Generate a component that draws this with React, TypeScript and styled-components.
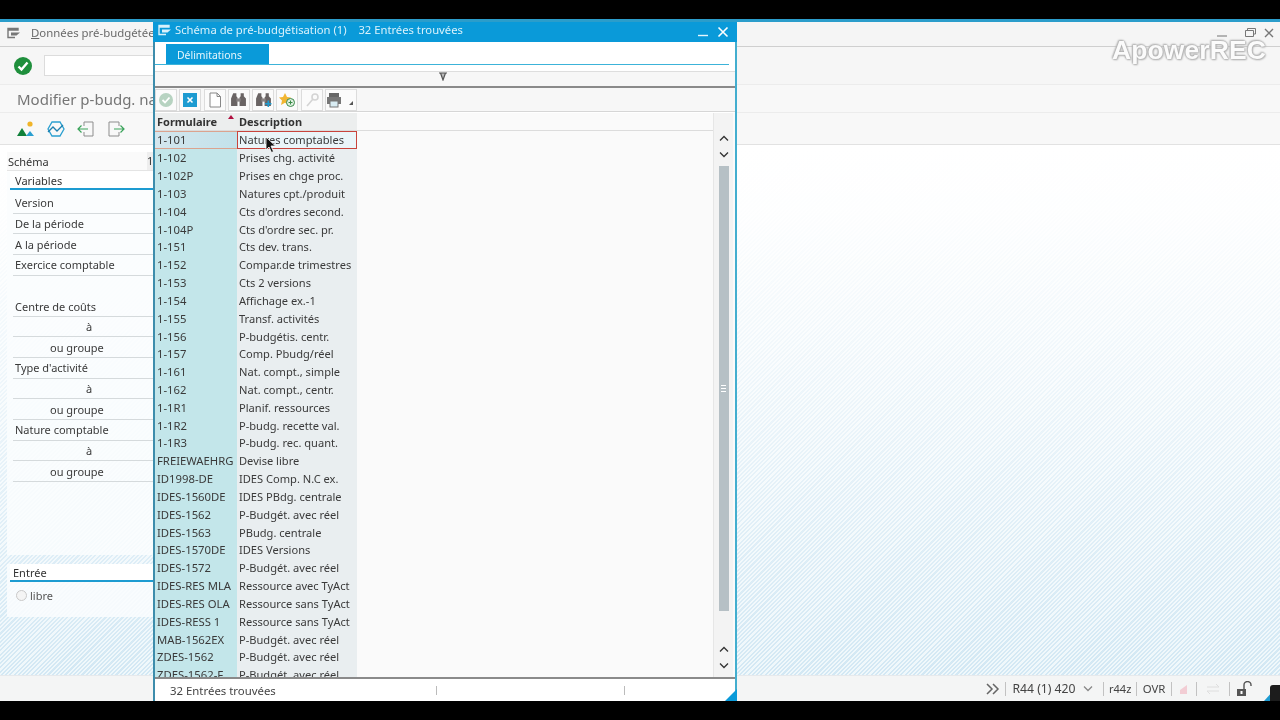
import React from "react";
import styled, { createGlobalStyle } from "styled-components";

const Global = createGlobalStyle`
  html, body { margin: 0; padding: 0; background: #000; overflow: hidden; }
  body { font-family: "Noto Sans", "DejaVu Sans", sans-serif; }
  * { box-sizing: border-box; }
`;

const Screen = styled.div`
  width: 1280px; height: 720px; display: flex; flex-direction: column; background: #000;
  filter: blur(0.4px);
`;
const BlackBar = styled.div<{ $h: number }>`height: ${p => p.$h}px; background: #000; flex: none;`;

const SapWindow = styled.div`
  position: relative; height: 682px; flex: none; display: flex; flex-direction: column;
  border-top: 3px solid #2b9dcb; background: #f7f7f7; overflow: hidden;
`;
const TitleBar = styled.div`
  height: 25px; flex: none; display: flex; align-items: center; gap: 10px; padding: 0 5px 3px 7px;
  background: #f5f5f5; border-bottom: 1px solid #cfcfcf; font-size: 11.4px; color: #6a6a6a;
  u { text-decoration: underline; }
`;
const WinControls = styled.div`
  margin-left: auto; display: flex; align-items: center; gap: 6px;
  svg:first-child { margin-right: 10px; }
`;
const CommandBar = styled.div`
  height: 38px; flex: none; display: flex; align-items: center; gap: 12px; padding: 0 14px;
  background: #f6f6f6; border-bottom: 1px solid #ececec;
`;
const CommandInput = styled.div`width: 210px; height: 21px; background: #fff; border: 1px solid #dcdcdc;`;
const PageTitle = styled.div`
  height: 28px; flex: none; display: flex; align-items: center; padding-left: 17px;
  font-size: 15px; color: #757575; background: #f8f8f8; border-bottom: 1px solid #ececec;
`;
const AppBar = styled.div`
  height: 32px; flex: none; display: flex; align-items: center; gap: 12px; padding-left: 17px;
  background: #f8f8f8; border-bottom: 1px solid #e2e2e2;
`;
const Body = styled.div`
  flex: 1; padding: 7px 0 0 7px; display: flex; flex-direction: column;
  background:
    linear-gradient(to bottom, #fff 0%, rgba(255,255,255,.96) 12%, rgba(255,255,255,.6) 50%, rgba(255,255,255,.08) 100%),
    repeating-linear-gradient(135deg, #cfe6f3 0 1.5px, #eef7fb 1.5px 3px);
`;
const SchemaRow = styled.div`
  height: 19px; width: 146px; overflow: hidden; display: flex; align-items: center; font-size: 11px; color: #333;
  padding-left: 1px; border-bottom: 1px solid #e4e4e4; background: #fafafa;
`;
const SchemaValue = styled.span`margin-left: auto; width: 6px; flex: none; height: 18px; line-height: 18px; background: #eee; overflow: hidden;`;
const Section = styled.div<{ $h: number; $mt: number }>`
  width: 260px; height: ${p => p.$h}px; margin-top: ${p => p.$mt}px; padding: 0 0 0 6px; background: rgba(250,253,254,.85);
`;
const SectionHead = styled.div<{ $pad: number }>`
  height: 18px; margin-left: -3px; padding-left: ${p => p.$pad}px; display: flex; align-items: center; font-size: 11px; color: #333;
  border-bottom: 2px solid #1d9bd1; background: #fff;
`;
const FormRows = styled.div`padding-top: 3px;`;
const FormRow = styled.div<{ $indent: number; $line: boolean }>`
  height: 20.65px; display: flex; align-items: center; padding-left: ${p => p.$indent}px;
  font-size: 11px; color: #3a3a3a; border-bottom: 1px solid ${p => (p.$line ? "#d5dadc" : "transparent")};
`;
const Radio = styled.span`
  width: 11px; height: 11px; border-radius: 50%; border: 1px solid #c9c9c9; background: #f4f4f4; margin: 0 3px 0 2px; flex: none;
`;
const RadioRow = styled.div`
  display: flex; align-items: center; height: 20px; margin-top: 3px; padding-left: 1px; font-size: 11px; color: #555;
`;
const StatusBar = styled.div`
  height: 26px; flex: none; display: flex; align-items: center; justify-content: flex-end; background: #f4f5f5;
  border-top: 1px solid #e6e9ec; color: #444;
`;
const StatusText = styled.span<{ $w: number; $size: number }>`
  width: ${p => p.$w}px; font-size: ${p => p.$size}px; text-align: center; white-space: nowrap;
`;
const StatusArrow = styled.span`width: 21px; display: flex; justify-content: center;`;
const StatusSep = styled.span`width: 1px; height: 14px; background: #c2c2c2; margin: 0 5px;`;
const StatusCorner = styled.div`
  position: relative; width: 19px; height: 25px; flex: none; margin-left: 8px;
  svg { position: absolute; left: -1px; top: 0; }
`;

const Watermark = styled.div`
  position: absolute; left: 1112px; top: 12px; font-family: "Liberation Sans", sans-serif; font-weight: 700;
  font-size: 26.5px; line-height: 32px; letter-spacing: 0.1px; color: rgba(255,255,255,.95); white-space: nowrap;
  text-shadow: 0 0 2px #aaa, 0 0 2px #aaa, 1px 1px 2px #bbb, -1px -1px 2px #bbb;
`;

const Dialog = styled.div`
  position: absolute; left: 153px; top: -3px; width: 584px; height: 682px; display: flex; flex-direction: column;
  background: #fff; border-left: 2px solid #3d8dac; border-right: 2px solid #43aecf; z-index: 2;
`;
const DialogTitle = styled.div`
  height: 23px; flex: none; display: flex; align-items: center; background: #0a9ad9; color: #d9f1fb;
  font-size: 11.25px; padding: 0 5px 2px; margin: 0 -2px;
`;
const DialogTitleText = styled.span`margin-left: 3px; white-space: pre;`;
const DialogControls = styled.div`margin-left: auto; display: flex; align-items: center; gap: 8px; padding: 5px 3px 0 0;`;
const TabStrip = styled.div`
  height: 23px; flex: none; margin-right: 6px; padding-left: 11px; border-bottom: 1px solid #3cb3d9; display: flex; align-items: flex-end;
`;
const Tab = styled.div`
  width: 103px; height: 20px; padding: 1px 0 0 11px; background: #0a9ad9; color: #e6f6fc; font-size: 10.4px; display: flex; align-items: center;
`;
const FilterStrip = styled.div`
  height: 17px; flex: none; margin-top: 6px; display: flex; align-items: flex-start; padding-left: 283px;
  background: #f7f7f7; border-top: 1px solid #dedede; border-bottom: 2px solid #8a8a8a;
`;
const Toolbar = styled.div`
  height: 24px; flex: none; margin-bottom: 1px; display: flex; align-items: center; gap: 2.3px; background: #f7f7f7; border-bottom: 1px solid #d6d6d6;
`;
const ToolBtn = styled.div<{ $w?: number }>`
  width: ${p => p.$w ?? 22}px; height: 22px; border: 1px solid #dcdcdc; background: #fbfbfb; display: flex; align-items: center; justify-content: center; flex: none;
`;
const GridArea = styled.div`
  flex: 1; min-height: 0; display: flex; background: #fafafa; border-bottom: 2px solid #8a8a8a;
`;
const GridMain = styled.div`width: 558px; flex: none; overflow: hidden;`;
const HeaderRow = styled.div`
  height: 18px; display: flex; border-bottom: 1px solid #dcdcdc; font-weight: 700; font-size: 11px; color: #333;
`;
const HeadCell = styled.div<{ $w: number; $pad: number }>`
  position: relative; width: ${p => p.$w}px; padding-left: ${p => p.$pad}px; display: flex; align-items: center; background: #eceeee; flex: none;
`;
const SortMark = styled.span`
  position: absolute; right: 3px; top: 2px; width: 0; height: 0; border-left: 3.5px solid transparent; border-right: 3.5px solid transparent; border-bottom: 4px solid #b01040;
`;
const Rows = styled.div`height: 546px; overflow: hidden;`;
const Row = styled.div`display: flex; height: 17.83px; color: #3a3a3a;`;
const KeyCell = styled.div<{ $sel?: boolean }>`
  width: 82px; flex: none; padding-left: 2px; display: flex; align-items: center; white-space: nowrap; overflow: hidden; font-size: 11.3px;
  background: ${p => (p.$sel ? "linear-gradient(90deg,#d4e6ee,#c2e2ea)" : "#c3e6ea")};
  ${p => p.$sel && "border-top: 1px solid #dba38f; border-bottom: 1px solid #dba38f;"}
`;
const DescCell = styled.div<{ $sel?: boolean }>`
  width: 120px; flex: none; padding-left: 2px; display: flex; align-items: center; white-space: nowrap; overflow: hidden; font-size: 11.1px;
  background: ${p => (p.$sel ? "#eaf5f9" : "#e9eef0")};
  ${p => p.$sel && "border: 1px solid #c8443c; padding-left: 1px;"}
`;
const Scroller = styled.div`
  width: 20px; flex: none; display: flex; flex-direction: column; align-items: center; background: #f3f3f3; border-left: 1px solid #e6e6e6; padding-top: 17px;
`;
const Arrow = styled.div`height: 16.5px; flex: none; display: flex; align-items: center; justify-content: center;`;
const Thumb = styled.div`
  width: 10px; height: 445px; margin: 3px 0 30px; background: #b6c0c5; display: flex; align-items: center; justify-content: center; flex: none;
`;
const Grip = styled.div`width: 5px; height: 7px; background: repeating-linear-gradient(#fff 0 1px, transparent 1px 3px);`;
const GridSpacer = styled.div`width: 2px; flex: none;`;
const DialogFooter = styled.div`
  position: relative; height: 22px; flex: none; display: flex; align-items: center; gap: 187px; font-size: 11.4px; color: #444; background: #fff;
`;
const FooterText = styled.span`width: 281px; margin-right: -187px; flex: none; padding-left: 15px; white-space: nowrap;`;
const FooterSep = styled.span`width: 1px; height: 9px; flex: none; background: #bbb;`;
const Corner = styled.div`
  position: absolute; right: -2px; bottom: 0; width: 0; height: 0; border-left: 12px solid transparent; border-bottom: 12px solid #0a9ad9;
`;
const Cursor = styled.svg`position: absolute; left: 110px; top: 117px; z-index: 3;`;

const rows: [string, string][] = [
  ["1-101", "Natures comptables"], ["1-102", "Prises chg. activité"], ["1-102P", "Prises en chge proc."],
  ["1-103", "Natures cpt./produit"], ["1-104", "Cts d'ordres second."], ["1-104P", "Cts d'ordre sec. pr."],
  ["1-151", "Cts dev. trans."], ["1-152", "Compar.de trimestres"], ["1-153", "Cts 2 versions"],
  ["1-154", "Affichage ex.-1"], ["1-155", "Transf. activités"], ["1-156", "P-budgétis. centr."],
  ["1-157", "Comp. Pbudg/réel"], ["1-161", "Nat. compt., simple"], ["1-162", "Nat. compt., centr."],
  ["1-1R1", "Planif. ressources"], ["1-1R2", "P-budg. recette val."], ["1-1R3", "P-budg. rec. quant."],
  ["FREIEWAEHRG", "Devise libre"], ["ID1998-DE", "IDES Comp. N.C ex."], ["IDES-1560DE", "IDES PBdg. centrale"],
  ["IDES-1562", "P-Budgét. avec réel"], ["IDES-1563", "PBudg. centrale"], ["IDES-1570DE", "IDES Versions"],
  ["IDES-1572", "P-Budgét. avec réel"], ["IDES-RES MLA", "Ressource avec TyAct"], ["IDES-RES OLA", "Ressource sans TyAct"],
  ["IDES-RESS 1", "Ressource sans TyAct"], ["MAB-1562EX", "P-Budgét. avec réel"], ["ZDES-1562", "P-Budgét. avec réel"],
  ["ZDES-1562-F", "P-Budgét. avec réel"],
];

const formRows: [string, number, boolean][] = [
  ["Version", 2, true], ["De la période", 2, true], ["A la période", 2, true], ["Exercice comptable", 2, true], ["", 2, false],
  ["Centre de coûts", 2, true], ["à", 73, true], ["ou groupe", 37, true],
  ["Type d'activité", 2, true], ["à", 73, true], ["ou groupe", 37, true],
  ["Nature comptable", 2, true], ["à", 73, true], ["ou groupe", 37, true],
];

const MenuIcon = ({ c }: { c: string }) => (
  <svg width="14" height="12" viewBox="0 0 14 12" fill="none" stroke={c}>
    <path d="M1 1.500h10v1.500H1zM1 3v7.500h7" strokeWidth="1.4" />
    <path d="M4 5.500h9L9.500 8.500H4z" fill={c} stroke="none" />
  </svg>
);
const Chevron = ({ up, c = "#333" }: { up?: boolean; c?: string }) => (
  <svg width="10" height="7" viewBox="0 0 10 7" fill="none" stroke={c} strokeWidth="1.3">
    <path d={up ? "M1 5.500l4-4 4 4" : "M1 1.500l4 4 4-4"} />
  </svg>
);
const Binoculars = ({ plus }: { plus?: boolean }) => (
  <svg width="17" height="17" viewBox="0 0 16 16">
    <path d="M3 2h3v3l1 1v8H1V7zM10 2h3v3l2 2v7H9V6l1-1z" fill="#6a6464" />
    <rect x="6" y="7" width="4" height="3" fill="#8a8484" />
    {plus && <path d="M12.500 9v6M9.500 12h6" stroke="#1d9bd1" strokeWidth="1.5" />}
  </svg>
);

export default function App() {
  return (
    <Screen>
      <Global />
      <BlackBar $h={19} />
      <SapWindow>
        <TitleBar>
          <MenuIcon c="#777" />
          <span><u>D</u>onnées pré-budgétées</span>
          <WinControls>
            <svg width="12" height="10" viewBox="0 0 12 10"><path d="M1 8h10" stroke="#888" strokeWidth="1.2" /></svg>
            <svg width="13" height="11" viewBox="0 0 13 11" fill="none" stroke="#777"><path d="M1.500 3.500h8v6h-8zM3.500 3V1.500h8V7H10" /></svg>
            <svg width="12" height="12" viewBox="0 0 12 12" stroke="#777" strokeWidth="1.4"><path d="M2 2l8 8M10 2l-8 8" /></svg>
          </WinControls>
        </TitleBar>
        <CommandBar>
          <svg width="18" height="18" viewBox="0 0 18 18">
            <circle cx="9" cy="9" r="9" fill="#1f8f3c" />
            <path d="M4.500 9.500l3 3 6-7" fill="none" stroke="#fff" strokeWidth="2.4" />
          </svg>
          <CommandInput />
        </CommandBar>
        <PageTitle>Modifier p-budg. nature cpt.</PageTitle>
        <AppBar>
          <svg width="18" height="18" viewBox="0 0 18 18">
            <path d="M0 16l5-8 5 8z" fill="#10803a" /><path d="M9 16l4-5 4 5z" fill="#2a9fd0" /><circle cx="13" cy="4" r="2.600" fill="#f0b429" />
          </svg>
          <svg width="18" height="18" viewBox="0 0 18 18" fill="none" stroke="#2a9fd0" strokeWidth="1.3">
            <path d="M5 2h8l4 7-4 7H5L1 9z" /><path d="M1 12l5-5 4 4 6-6" stroke="#1c7fae" />
          </svg>
          <svg width="18" height="18" viewBox="0 0 18 18" fill="none">
            <path d="M7 6V2h9v14H7v-4" stroke="#8d8d8d" /><path d="M11 9H1M4.500 5.500L1 9l3.500 3.500" stroke="#3aa35a" strokeWidth="1.2" />
          </svg>
          <svg width="18" height="18" viewBox="0 0 18 18" fill="none">
            <path d="M12 6V2H2v14h10v-4" stroke="#8d8d8d" /><path d="M7 9h10M13.500 5.500L17 9l-3.500 3.500" stroke="#3aa35a" strokeWidth="1.2" />
          </svg>
        </AppBar>
        <Body>
          <SchemaRow><span>Schéma</span><SchemaValue>1</SchemaValue></SchemaRow>
          <Section $h={383} $mt={1}>
            <SectionHead $pad={5}>Variables</SectionHead>
            <FormRows>
              {formRows.map(([t, ind, line], i) => (
                <FormRow key={i} $indent={ind} $line={line}>{t}</FormRow>
              ))}
            </FormRows>
          </Section>
          <Section $h={53} $mt={9}>
            <SectionHead $pad={3}>Entrée</SectionHead>
            <RadioRow><Radio />libre</RadioRow>
          </Section>
        </Body>
        <StatusBar>
          <svg width="14" height="12" viewBox="0 0 14 12" fill="none" stroke="#666" strokeWidth="1.5"><path d="M1 1l5 5-5 5M7 1l5 5-5 5" /></svg>
          <StatusSep />
          <StatusText $w={66} $size={12.2}>R44 (1) 420</StatusText>
          <StatusArrow><Chevron c="#888" /></StatusArrow>
          <StatusSep />
          <StatusText $w={22} $size={11}>r44z</StatusText>
          <StatusSep />
          <StatusText $w={24} $size={11.4}>OVR</StatusText>
          <StatusSep />
          <svg width="14" height="12" viewBox="0 0 14 12"><path d="M3 11V7l7-5v9z" fill="#f2cdd4" /></svg>
          <StatusSep />
          <svg width="22" height="12" viewBox="0 0 22 12" fill="none" stroke="#dedede"><path d="M5 4h12M14 1l3 3M17 8H5M8 11L5 8" /></svg>
          <StatusSep />
          <svg width="18" height="16" viewBox="0 0 18 16" fill="none"><rect x="2" y="8" width="9" height="7" fill="#555" /><rect x="5.500" y="10" width="2" height="3" fill="#fff" /><path d="M9 8V4a3.500 3.500 0 0 1 7 0v1" stroke="#555" strokeWidth="1.4" /></svg>
          <StatusCorner>
            <svg width="22" height="25" viewBox="0 0 22 25">
              <path d="M4 25L14 14v11z" fill="#1d9bd1" />
              <path d="M10 25V12q0-3 3-3h9v16z" fill="#1c1c1c" />
            </svg>
          </StatusCorner>
        </StatusBar>

        <Watermark>ApowerREC</Watermark>

        <Dialog>
          <DialogTitle>
            <MenuIcon c="#d9f1fb" />
            <DialogTitleText>Schéma de pré-budgétisation (1)    32 Entrées trouvées</DialogTitleText>
            <DialogControls>
              <svg width="12" height="10" viewBox="0 0 12 10"><path d="M1 8.500h10" stroke="#e6f6fc" strokeWidth="1.4" /></svg>
              <svg width="12" height="12" viewBox="0 0 12 12" stroke="#fff" strokeWidth="1.6"><path d="M1.500 1.500l9 9M10.500 1.500l-9 9" /></svg>
            </DialogControls>
          </DialogTitle>
          <TabStrip><Tab>Délimitations</Tab></TabStrip>
          <FilterStrip>
            <svg width="10" height="9" viewBox="0 0 10 9"><path d="M1 1h8M2.500 1L5 8l2.500-7" stroke="#555" strokeWidth="1.2" fill="#bbb" /></svg>
          </FilterStrip>
          <Toolbar>
            <ToolBtn><svg width="16" height="16" viewBox="0 0 16 16"><circle cx="8" cy="8" r="7" fill="#b7d3c1" /><path d="M4.500 8l2.500 2.500 4.500-5" fill="none" stroke="#fff" strokeWidth="1.8" /></svg></ToolBtn>
            <ToolBtn><svg width="14" height="14" viewBox="0 0 14 14"><rect width="14" height="14" fill="#1d9bd1" /><path d="M4.500 4.500l5 5M9.500 4.500l-5 5" stroke="#fff" strokeWidth="1.6" /></svg></ToolBtn>
            <ToolBtn><svg width="14" height="16" viewBox="0 0 14 16" fill="#fff" stroke="#888"><path d="M2 1h7l3.500 3.500V15H2zM9 1v3.500h3.500" /></svg></ToolBtn>
            <ToolBtn><Binoculars /></ToolBtn>
            <ToolBtn><Binoculars plus /></ToolBtn>
            <ToolBtn><svg width="18" height="16" viewBox="0 0 18 16"><path d="M7 1l2 4 4 .5-3 3 1 4.500-4-2.300-4 2.300 1-4.500-3-3 4-.5z" fill="#f2b632" /><circle cx="12.500" cy="10.500" r="4" fill="#dff0e0" stroke="#3a8a4a" /><path d="M10.500 10.500h4M12.500 8.500v4" stroke="#3a8a4a" /></svg></ToolBtn>
            <ToolBtn><svg width="16" height="16" viewBox="0 0 16 16" fill="none" stroke="#d4d4d4" strokeWidth="1.6"><circle cx="11" cy="5" r="3" /><path d="M9 7l-6 7" /></svg></ToolBtn>
            <ToolBtn $w={32}>
              <svg width="30" height="16" viewBox="0 0 30 16"><rect x="3" y="1" width="10" height="4" fill="#666" /><rect x="1" y="5" width="14" height="7" fill="#777" /><rect x="4" y="9" width="8" height="6" fill="#d8ecf3" stroke="#777" /><path d="M23 13l4-4v4z" fill="#555" /></svg>
            </ToolBtn>
          </Toolbar>
          <GridArea>
            <GridMain>
              <HeaderRow>
                <HeadCell $w={82} $pad={2}>Formulaire<SortMark /></HeadCell>
                <HeadCell $w={120} $pad={2}>Description</HeadCell>
              </HeaderRow>
              <Rows>
                {rows.map(([k, d], i) => (
                  <Row key={k}>
                    <KeyCell $sel={i === 0}>{k}</KeyCell>
                    <DescCell $sel={i === 0}>{d}</DescCell>
                  </Row>
                ))}
              </Rows>
            </GridMain>
            <Scroller>
              <Arrow><Chevron up /></Arrow>
              <Arrow><Chevron /></Arrow>
              <Thumb><Grip /></Thumb>
              <Arrow><Chevron up /></Arrow>
              <Arrow><Chevron /></Arrow>
            </Scroller>
            <GridSpacer />
          </GridArea>
          <DialogFooter>
            <FooterText>32 Entrées trouvées</FooterText>
            <FooterSep />
            <FooterSep />
            <Corner />
          </DialogFooter>
          <Cursor width="12" height="18" viewBox="0 0 12 18">
            <path d="M1 1v13l3-3 2.500 5.500 2-1L6 10h4.500z" fill="#111" stroke="#fff" strokeWidth="0.8" />
          </Cursor>
        </Dialog>
      </SapWindow>
      <BlackBar $h={19} />
    </Screen>
  );
}
